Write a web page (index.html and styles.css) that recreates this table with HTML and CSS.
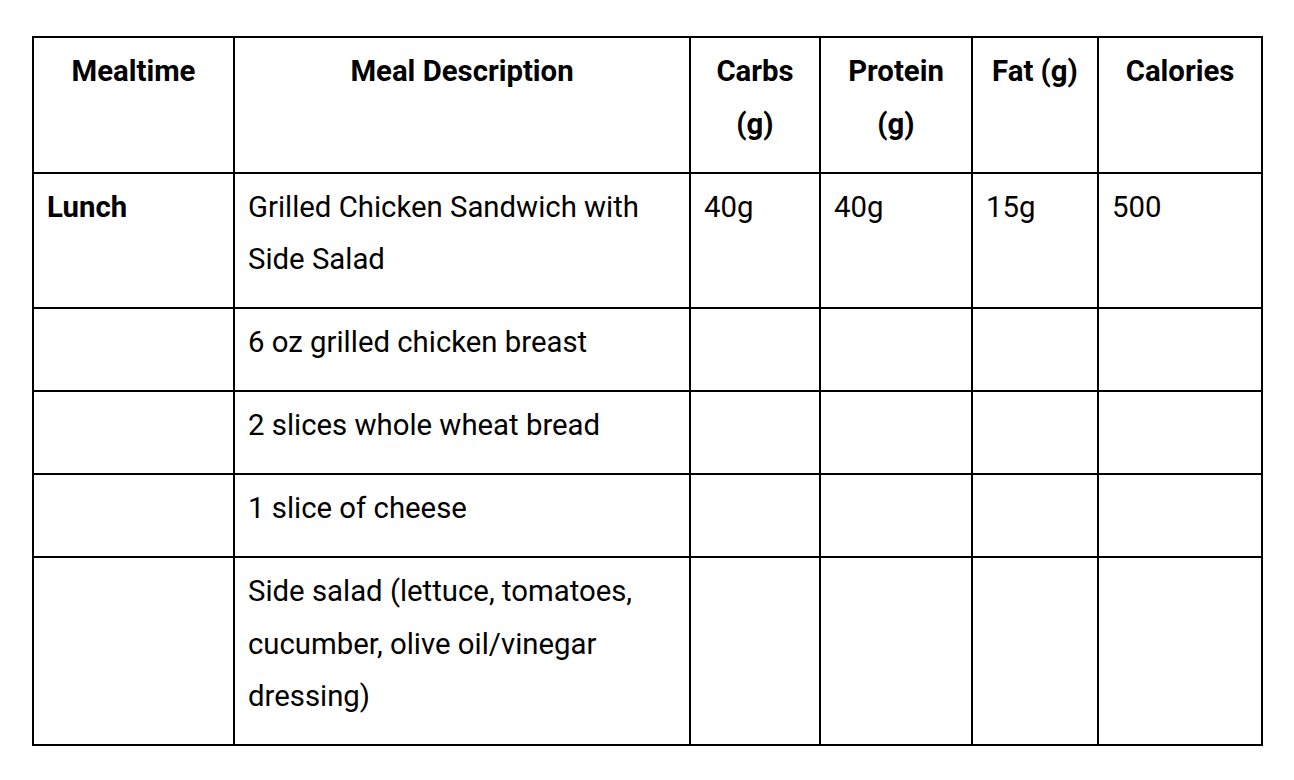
FILE: index.html
```html
<!DOCTYPE html>
<html>
<head>
<meta charset="utf-8">
<link rel="stylesheet" href="styles.css">
</head>
<body>
<div class="page">
<table class="meals">
<colgroup>
<col class="c-meal"><col class="c-desc"><col class="c-carbs"><col class="c-protein"><col class="c-fat"><col class="c-cal">
</colgroup>
<thead>
<tr><th>Mealtime</th><th>Meal Description</th><th>Carbs (g)</th><th>Protein (g)</th><th>Fat (g)</th><th>Calories</th></tr>
</thead>
<tbody>
<tr><td class="meal">Lunch</td><td>Grilled Chicken Sandwich with Side Salad</td><td>40g</td><td>40g</td><td>15g</td><td>500</td></tr>
<tr><td></td><td>6 oz grilled chicken breast</td><td></td><td></td><td></td><td></td></tr>
<tr><td></td><td>2 slices whole wheat bread</td><td></td><td></td><td></td><td></td></tr>
<tr><td></td><td>1 slice of cheese</td><td></td><td></td><td></td><td></td></tr>
<tr><td></td><td>Side salad (lettuce, tomatoes, cucumber, olive oil/vinegar dressing)</td><td></td><td></td><td></td><td></td></tr>
</tbody>
</table>
</div>
</body>
</html>
```
FILE: styles.css
```css
html, body {
  margin: 0;
  padding: 0;
  background: #ffffff;
}
.page {
  padding: 36px 0 0 32px;
}
.meals {
  border-collapse: collapse;
  table-layout: fixed;
  width: 1229px;
  font-family: Roboto, "Liberation Sans", sans-serif;
  font-size: 29.33px;
  line-height: 52.5px;
  color: #000;
}
.c-meal { width: 201px; }
.c-desc { width: 456px; }
.c-carbs { width: 130px; }
.c-protein { width: 152px; }
.c-fat { width: 126px; }
.c-cal { width: 164px; }
.meals th, .meals td {
  border: 2px solid #000;
  padding: 7px 13px 21.5px 13px;
  vertical-align: top;
  text-align: left;
  font-weight: 400;
}
.meals th {
  text-align: center;
  font-weight: 700;
}
.meals td.meal {
  font-weight: 700;
}
```
